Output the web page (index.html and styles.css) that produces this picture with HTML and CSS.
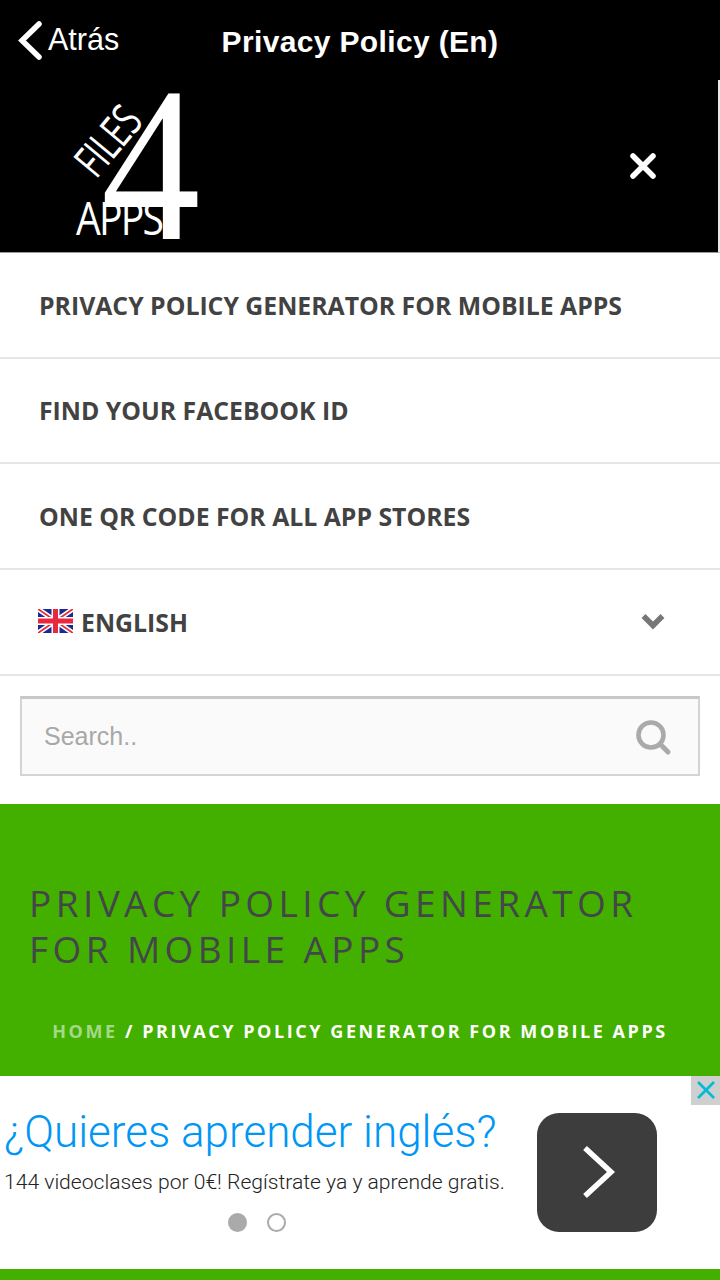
FILE: index.html
```html
<!DOCTYPE html>
<html lang="en">

<head>
    <meta charset="UTF-8">
    <meta name="viewport" content="width=device-width, initial-scale=1.0">
    <title>Privacy Policy (En)</title>
    <link rel="stylesheet" href="styles.css">
</head>

<body>

    <div class="topbar">
        <a class="back">
            <svg class="back-icon" width="26" height="40" viewBox="0 0 26 40">
                <path d="M23 4 L6 20.5 L23 37" fill="none" stroke="#fff" stroke-width="5.5" stroke-linecap="round" stroke-linejoin="miter"/>
            </svg>
            <span>Atrás</span>
        </a>
        <h1>Privacy Policy (En)</h1>
    </div>

    <header class="site-header">
        <svg class="logo" width="140" height="150" viewBox="0 0 140 150">
            <text class="logo-four" transform="translate(36 149) scale(0.92 1.02)">4</text>
            <text class="logo-files" transform="translate(31 90) rotate(-50) scale(0.72 1)">FILES</text>
            <text class="logo-apps" transform="translate(11 145) scale(0.87 1)">APPS</text>
        </svg>
        <svg class="close-icon" width="30" height="30" viewBox="0 0 30 30">
            <path d="M5 5 L25 25 M25 5 L5 25" fill="none" stroke="#fff" stroke-width="5.5" stroke-linecap="round"/>
        </svg>
    </header>

    <nav class="menu">
        <a class="menu-item">PRIVACY POLICY GENERATOR FOR MOBILE APPS</a>
        <a class="menu-item">FIND YOUR FACEBOOK ID</a>
        <a class="menu-item">ONE QR CODE FOR ALL APP STORES</a>
        <a class="menu-item lang">
            <svg class="flag" width="35" height="24" viewBox="0 0 35 24">
                <rect width="35" height="24" fill="#1a2a90"/>
                <path d="M0 0 L35 24 M35 0 L0 24" stroke="#fff" stroke-width="5"/>
                <path d="M0 0 L35 24 M35 0 L0 24" stroke="#e8283c" stroke-width="1.8"/>
                <path d="M17.5 0 V24 M0 12 H35" stroke="#fff" stroke-width="8"/>
                <path d="M17.5 0 V24 M0 12 H35" stroke="#e8283c" stroke-width="5"/>
            </svg>
            <span>ENGLISH</span>
            <svg class="chevron" width="26" height="18" viewBox="0 0 26 18">
                <path d="M3.5 4 L13 13.5 L22.5 4" fill="none" stroke="#777" stroke-width="5.5"/>
            </svg>
        </a>
    </nav>

    <div class="search-wrap">
        <div class="search">
            <span class="search-text">Search..</span>
            <svg class="search-icon" width="38" height="38" viewBox="0 0 38 38">
                <circle cx="16" cy="16" r="12.5" fill="none" stroke="#aaa" stroke-width="4.6"/>
                <path d="M25 25 L33 33" stroke="#aaa" stroke-width="5" stroke-linecap="round"/>
            </svg>
        </div>
    </div>

    <section class="banner">
        <h2>PRIVACY POLICY GENERATOR FOR MOBILE APPS</h2>
        <p class="crumbs"><span class="crumb-home">HOME</span> / PRIVACY POLICY GENERATOR FOR MOBILE APPS</p>
    </section>

    <aside class="ad">
        <div class="ad-copy">
            <div class="ad-title">¿Quieres aprender inglés?</div>
            <div class="ad-sub">144 videoclases por 0€! Regístrate ya y aprende gratis.</div>
            <div class="dots">
                <span class="dot on"></span>
                <span class="dot"></span>
            </div>
        </div>
        <div class="ad-btn">
            <svg width="40" height="56" viewBox="0 0 40 56">
                <path d="M5 4 L31 28 L5 52" fill="none" stroke="#fff" stroke-width="5.5"/>
            </svg>
        </div>
        <div class="ad-close">
            <svg width="20" height="20" viewBox="0 0 20 20">
                <path d="M2 2 L18 18 M18 2 L2 18" fill="none" stroke="#00bcd4" stroke-width="2.6"/>
            </svg>
        </div>
    </aside>

    <div class="bottom-strip"></div>

</body>

</html>
```

FILE: styles.css
```css
html,
body {
    margin: 0;
    padding: 0;
}

body {
    width: 720px;
    height: 1280px;
    overflow: hidden;
    background-color: white;
    font-family: "Open Sans", sans-serif;
}

.topbar {
    height: 80px;
    background-color: black;
    position: relative;
    display: flex;
    align-items: center;
    justify-content: center;
}

.topbar h1 {
    margin: 0;
    color: white;
    font-family: "Liberation Sans", Arial, sans-serif;
    font-size: 30px;
    font-weight: bold;
    letter-spacing: 0.35px;
    padding-top: 4px;
}

.back {
    position: absolute;
    left: 16px;
    top: 20px;
    display: flex;
    align-items: center;
    gap: 6px;
    color: white;
    font-family: "Liberation Sans", Arial, sans-serif;
    font-size: 30.5px;
}

.back span {
    margin-top: -2px;
}

.site-header {
    height: 172px;
    background-color: black;
    border-right: 2px solid #e8e8e8;
    border-bottom: 1px solid #999;
    display: flex;
    align-items: flex-start;
    justify-content: space-between;
    padding: 0 60px 0 65px;
    box-sizing: content-box;
    width: 593px;
}

.logo {
    margin-top: 10px;
    overflow: visible;
}

.logo text {
    fill: white;
}

.logo-four {
    font-family: "Liberation Serif", serif;
    font-size: 216px;
}

.logo-files {
    font-family: "Open Sans", sans-serif;
    font-size: 45px;
    letter-spacing: -1px;
}

.logo-apps {
    font-family: "Open Sans", sans-serif;
    font-size: 45px;
    letter-spacing: -2px;
}

.close-icon {
    margin-top: 71px;
}

.menu-item {
    display: flex;
    align-items: center;
    height: 103.67px;
    padding-left: 39px;
    border-bottom: 2px solid #e6e6e6;
    color: #424242;
    font-size: 24.8px;
    font-weight: bold;
}

.lang .flag {
    margin-left: -1px;
    margin-right: 8px;
    margin-top: -2px;
}

.lang .chevron {
    margin-left: auto;
    margin-right: 54px;
    margin-top: -2px;
}

.search-wrap {
    padding: 20px 20px 28.33px;
}

.search {
    height: 75px;
    background-color: #fafafa;
    border: 2px solid #d4d4d4;
    border-top: 3px solid #c8c8c8;
    display: flex;
    align-items: center;
    justify-content: space-between;
    padding: 0 25px 0 22px;
}

.search-text {
    color: #a8a8a8;
    font-family: "Liberation Sans", Arial, sans-serif;
    font-size: 25px;
}

.search-icon {
    margin-top: 4px;
}

.banner {
    height: 272px;
    background-color: #43b000;
    box-sizing: border-box;
    padding: 76px 29px 0;
}

.banner h2 {
    margin: 0;
    color: #44474a;
    font-size: 37px;
    font-weight: normal;
    line-height: 46px;
    letter-spacing: 4.4px;
}

.crumbs {
    margin: 47px 0 0;
    color: white;
    font-size: 18px;
    font-weight: bold;
    letter-spacing: 2.56px;
    text-align: center;
    white-space: nowrap;
}

.crumb-home {
    color: #a5d98a;
}

.ad {
    position: relative;
    height: 193px;
    background-color: white;
    display: flex;
}

.ad-copy {
    width: 537px;
    padding-left: 4px;
    box-sizing: border-box;
    font-family: Roboto, sans-serif;
}

.ad-title {
    margin-top: 27px;
    color: #0096f5;
    font-size: 44px;
    font-weight: 300;
    line-height: 58px;
    white-space: nowrap;
}

.ad-sub {
    margin-top: 7px;
    color: #222;
    font-size: 21.1px;
    font-weight: 300;
    line-height: 28px;
    white-space: nowrap;
}

.dots {
    display: flex;
    justify-content: center;
    gap: 20px;
    margin-top: 17px;
    padding-right: 28px;
}

.dot {
    width: 19px;
    height: 19px;
    box-sizing: border-box;
    border: 2px solid #aaa;
    border-radius: 50%;
}

.dot.on {
    background-color: #aaa;
}

.ad-btn {
    width: 120px;
    height: 119px;
    margin-top: 37px;
    background-color: #3d3d3d;
    border-radius: 22px;
    display: flex;
    align-items: center;
    justify-content: center;
    padding-left: 6px;
    box-sizing: border-box;
}

.ad-close {
    position: absolute;
    right: 0;
    top: 0;
    width: 29px;
    height: 29px;
    background-color: #cfcfcf;
    display: flex;
    align-items: center;
    justify-content: center;
}

.bottom-strip {
    height: 11px;
    background-color: #43b000;
}
```
